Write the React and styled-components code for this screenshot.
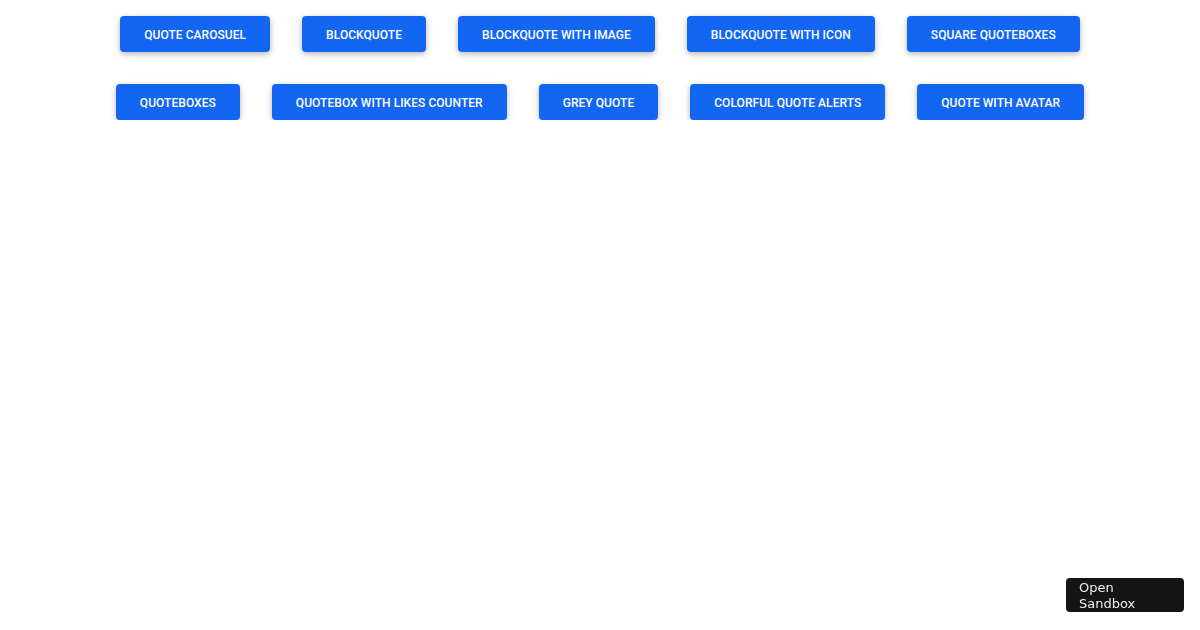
import React from "react";
import styled, { createGlobalStyle } from "styled-components";

const Global = createGlobalStyle`
  html, body { margin: 0; padding: 0; background: #fff; }
  body { font-family: Roboto, "Liberation Sans", sans-serif; }
`;

const Page = styled.div`
  display: flex;
  flex-direction: column;
  align-items: center;
  padding-top: 16px;
  gap: 32px;
`;

const Row = styled.div`
  display: flex;
  justify-content: center;
  gap: 32px;
`;

const Button = styled.button`
  font-family: Roboto, "Liberation Sans", sans-serif;
  font-size: 12px;
  font-weight: 500;
  letter-spacing: 0.05px;
  line-height: 16px;
  text-transform: uppercase;
  color: #fff;
  background: #1266f1;
  border: 0;
  border-radius: 4px;
  padding: 11px 24px 9px;
  box-shadow: 0 2px 5px 0 rgba(0, 0, 0, 0.2), 0 2px 10px 0 rgba(0, 0, 0, 0.1);
  cursor: pointer;
  white-space: nowrap;
`;

const Sandbox = styled.a`
  position: fixed;
  right: 16px;
  bottom: 18px;
  width: 118px;
  box-sizing: border-box;
  padding: 2px 13px 0;
  background: #151515;
  border-radius: 4px;
  color: #ececec;
  font-family: "DejaVu Sans", sans-serif;
  font-size: 13px;
  line-height: 16px;
  text-decoration: none;
`;

const rows = [
  ["Quote Carosuel", "Blockquote", "Blockquote with image", "Blockquote with icon", "Square quoteboxes"],
  ["Quoteboxes", "Quotebox with likes counter", "Grey quote", "Colorful quote alerts", "Quote with avatar"],
];

export default function App() {
  return (
    <>
      <Global />
      <Page>
        {rows.map((r, i) => (
          <Row key={i}>
            {r.map((t) => (
              <Button key={t}>{t}</Button>
            ))}
          </Row>
        ))}
      </Page>
      <Sandbox href="#">Open<br />Sandbox</Sandbox>
    </>
  );
}
